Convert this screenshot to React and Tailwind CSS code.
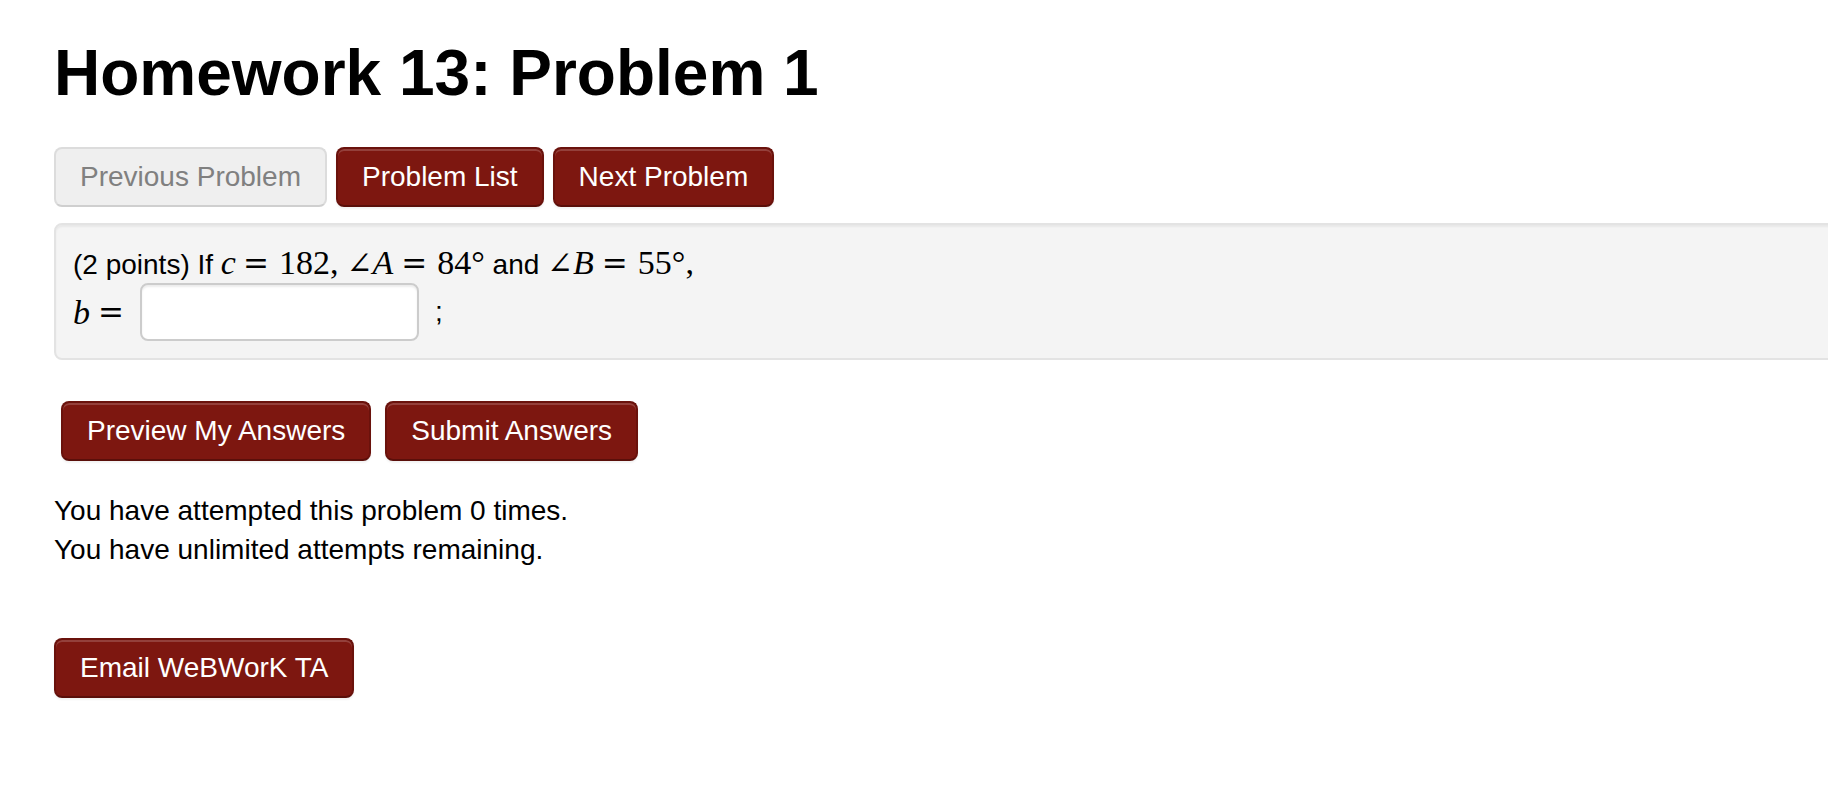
import React, { useState } from 'react';

const sans = { fontFamily: '"Liberation Sans", Arial, Helvetica, sans-serif' };

function RedButton({ children, className = '' }) {
    return (
        <button
            className={`px-[24px] py-[8px] text-[28px] leading-[40px] text-white bg-[#7d1710] border-2 border-[#6a120c] border-b-[#5a0f0a] rounded-[8px] shadow-[inset_0_2px_0_rgba(255,255,255,0.18),0_2px_2px_rgba(0,0,0,0.05)] whitespace-nowrap ${className}`}
        >
            {children}
        </button>
    );
}

function V({ children }) {
    // math variable, italic serif like MathJax
    return <span className="italic text-[34px]" style={{ fontFamily: '"Liberation Serif", "Times New Roman", serif' }}>{children}</span>;
}

function N({ children }) {
    return <span className="text-[34px]" style={{ fontFamily: '"Liberation Serif", "Times New Roman", serif' }}>{children}</span>;
}

function Sym({ children, className = '' }) {
    return <span className={`text-[31px] ${className}`} style={{ fontFamily: '"DejaVu Serif", serif' }}>{children}</span>;
}

export default function App() {
    const [answer, setAnswer] = useState('');

    return (
        <div className="min-h-screen bg-white text-black overflow-hidden pl-[54px] pt-[33px]" style={sans}>
            <h1 className="text-[64px] leading-[80px] font-bold m-0 whitespace-nowrap">Homework 13: Problem 1</h1>

            <div className="flex gap-[9px] mt-[34px]">
                <button className="px-[24px] py-[8px] text-[28px] leading-[40px] text-[#808080] bg-[#efefef] border-2 border-[#dcdcdc] border-b-[#cfcfcf] rounded-[8px] whitespace-nowrap">
                    Previous Problem
                </button>
                <RedButton>Problem List</RedButton>
                <RedButton>Next Problem</RedButton>
            </div>

            <div className="mt-[16px] w-[1800px] bg-[#f4f4f4] border-2 border-[#e3e3e3] rounded-[8px] shadow-[inset_0_2px_2px_rgba(0,0,0,0.05)] pl-[17px] pt-[18px] pb-[17px]">
                <div className="h-[40px] text-[28px] leading-[40px] whitespace-nowrap">
                    (2 points) If <V>c</V>
                    <Sym className="ml-[7px] mr-[10px]">=</Sym>
                    <N>182,</N>
                    <Sym className="ml-[8px]">∠</Sym><V>A</V>
                    <Sym className="ml-[8px] mr-[10px]">=</Sym>
                    <N>84°</N> and <Sym>∠</Sym><V>B</V>
                    <Sym className="ml-[8px] mr-[10px]">=</Sym>
                    <N>55°</N><N>,</N>
                </div>
                <div className="flex items-center h-[58px]">
                    <V>b</V>
                    <Sym className="ml-[8px]">=</Sym>
                    <input
                        type="text"
                        value={answer}
                        onChange={(e) => setAnswer(e.target.value)}
                        className="ml-[16px] w-[279px] h-[58px] bg-white border-2 border-[#cccccc] rounded-[8px] shadow-[inset_0_2px_2px_rgba(0,0,0,0.075)] px-[12px] text-[28px] focus:outline-none"
                    />
                    <span className="ml-[16px] text-[28px]">;</span>
                </div>
            </div>

            <div className="flex gap-[14px] mt-[41px] ml-[7px]">
                <RedButton>Preview My Answers</RedButton>
                <RedButton>Submit Answers</RedButton>
            </div>

            <div className="mt-[30px] text-[28px] leading-[39px]">
                <p className="m-0">You have attempted this problem 0 times.</p>
                <p className="m-0">You have unlimited attempts remaining.</p>
            </div>

            <div className="mt-[69px]">
                <RedButton>Email WeBWorK TA</RedButton>
            </div>
        </div>
    );
}
